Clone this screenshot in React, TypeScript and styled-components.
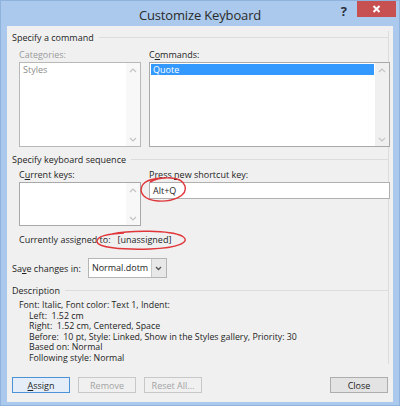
import React from "react";
import styled, { createGlobalStyle } from "styled-components";

const GlobalStyle = createGlobalStyle`
  html, body { margin: 0; padding: 0; background: #ffffff; }
  body { font-family: "Open Sans", "Noto Sans", sans-serif; }
`;

const FONT = `"Open Sans", "Noto Sans", sans-serif`;

const Window = styled.div`
  position: relative;
  width: 400px;
  height: 406px;
  box-sizing: border-box;
  background: #aac9ec;
  border: 1px solid #8fb3dc;
  display: flex;
  flex-direction: column;
  font-family: ${FONT};
  font-size: 9px;
  color: #1e1e1e;
`;

const TitleBar = styled.div`
  height: 25px;
  display: grid;
  grid-template-columns: 1fr auto 1fr;
  align-items: start;
`;

const Title = styled.div`
  grid-column: 2;
  font-size: 13px;
  letter-spacing: -0.15px;
  color: #2b2b2b;
  line-height: 28px;
`;

const Controls = styled.div`
  grid-column: 3;
  display: flex;
  justify-content: flex-end;
  align-items: flex-start;
`;

const Help = styled.div`
  font-size: 13px;
  font-weight: 700;
  color: #2b3040;
  margin: 1px 10px 0 0;
`;

const CloseBtn = styled.div`
  width: 39px;
  height: 16px;
  background: #c75050;
  display: flex;
  align-items: center;
  justify-content: center;
  margin-right: 3px;
`;

const Client = styled.div`
  flex: 1;
  margin: 0 6px 3px 6px;
  background: #f0f0f0;
  padding: 5px 0 0 5px;
  display: flex;
  flex-direction: column;
`;

const Panel = styled.div`
  margin-right: 4px;
  border-right: 1px solid #dcdcdc;
  padding-right: 6px;
  display: flex;
  flex-direction: column;
`;

const SectionHeader = styled.div<{ $mt?: number }>`
  display: flex;
  align-items: center;
  margin-top: ${(p) => p.$mt ?? 0}px;
  height: 12px;
  margin-right: -6px;
  &::after {
    content: "";
    flex: 1;
    height: 1px;
    background: #dcdcdc;
    margin-left: 5px;
  }
`;

const Row = styled.div<{ $mt?: number }>`
  display: grid;
  grid-template-columns: 122px 241px;
  column-gap: 8px;
  margin-left: 7px;
  margin-top: ${(p) => p.$mt ?? 0}px;
`;

const Label = styled.div<{ $disabled?: boolean }>`
  color: ${(p) => (p.$disabled ? "#9a9a9a" : "#1e1e1e")};
  height: 12px;
  line-height: 12px;
  margin-bottom: 1px;
  u { text-decoration: underline; text-underline-offset: 1px; }
`;

const ListBox = styled.div<{ $h: number; $disabled?: boolean }>`
  height: ${(p) => p.$h}px;
  box-sizing: border-box;
  border: 1px solid ${(p) => (p.$disabled ? "#b8b8b8" : "#a9a9a9")};
  background: #ffffff;
  display: grid;
  grid-template-columns: 1fr 14px;
`;

const ListItems = styled.div`
  padding: 1px 1px 0 1px;
`;

const ListItem = styled.div<{ $selected?: boolean; $disabled?: boolean }>`
  height: 11px;
  line-height: 11px;
  padding-left: 2px;
  background: ${(p) => (p.$selected ? "#3399ff" : "transparent")};
  color: ${(p) => (p.$selected ? "#ffffff" : p.$disabled ? "#8c8c8c" : "#1e1e1e")};
`;

const ScrollCol = styled.div<{ $bg?: string }>`
  background: ${(p) => p.$bg ?? "#f7f7f7"};
  display: flex;
  flex-direction: column;
  justify-content: space-between;
  align-items: center;
  padding: 5px 0 4px;
`;

const TextInput = styled.div`
  height: 17px;
  box-sizing: border-box;
  border: 1px solid #b0b0b0;
  background: #ffffff;
  padding-left: 3px;
  line-height: 15px;
  color: #1e1e1e;
`;

const AssignedRow = styled.div`
  display: flex;
  margin: 7px 0 0 7px;
  height: 13px;
  line-height: 13px;
  gap: 7px;
`;

const SaveRow = styled.div`
  display: flex;
  align-items: center;
  margin-top: 12px;
  height: 20px;
  gap: 7px;
  u { text-decoration: underline; text-underline-offset: 1px; }
`;

const Select = styled.div`
  width: 79px;
  height: 20px;
  box-sizing: border-box;
  border: 1px solid #b5b5b5;
  background: #ffffff;
  display: flex;
`;

const SelectValue = styled.div`
  flex: 1;
  padding-left: 3px;
  line-height: 18px;
`;

const SelectArrow = styled.div`
  width: 14px;
  border-left: 1px solid #c8c8c8;
  background: #e8e8e8;
  display: flex;
  align-items: center;
  justify-content: center;
`;

const Description = styled.div`
  margin: 4px 0 0 7px;
  font-size: 8.8px;
  line-height: 10.6px;
`;

const DescLine = styled.div<{ $indent?: boolean }>`
  padding-left: ${(p) => (p.$indent ? 10 : 0)}px;
  white-space: pre;
`;

const ButtonBar = styled.div`
  display: flex;
  margin-top: auto;
  margin-bottom: 9px;
  padding-right: 5px;
  gap: 8px;
`;

const Button = styled.div<{ $variant?: "default" | "disabled" | "normal"; $push?: boolean }>`
  width: 58px;
  height: 16px;
  box-sizing: border-box;
  display: flex;
  align-items: center;
  justify-content: center;
  margin-left: ${(p) => (p.$push ? "auto" : "0")};
  border: 1px solid
    ${(p) =>
      p.$variant === "default" ? "#4b93d6" : p.$variant === "disabled" ? "#c8c8c8" : "#adadad"};
  background: ${(p) =>
    p.$variant === "default" ? "#e5eef8" : p.$variant === "disabled" ? "#f0f0f0" : "#e3e3e3"};
  color: ${(p) => (p.$variant === "disabled" ? "#a3a3a3" : "#1e1e1e")};
  u { text-decoration: underline; text-underline-offset: 1px; }
`;

const Annotations = styled.svg`
  position: absolute;
  left: -1px;
  top: -1px;
  width: 400px;
  height: 406px;
  pointer-events: none;
`;

const Chevron = ({ up }: { up?: boolean }) => (
  <svg width="8" height="5" viewBox="0 0 8 5">
    <polyline
      points={up ? "1,4 4,1 7,4" : "1,1 4,4 7,1"}
      fill="none"
      stroke="#c4c4c4"
      strokeWidth="1.2"
    />
  </svg>
);

export default function App() {
  return (
    <>
      <GlobalStyle />
      <Window>
        <TitleBar>
          <Title>Customize Keyboard</Title>
          <Controls>
            <Help>?</Help>
            <CloseBtn>
              <svg width="9" height="8" viewBox="0 0 9 8">
                <path d="M1.5 1 L7.5 7 M7.5 1 L1.5 7" stroke="#ffffff" strokeWidth="2" />
              </svg>
            </CloseBtn>
          </Controls>
        </TitleBar>
        <Client>
          <Panel>
            <SectionHeader>Specify a command</SectionHeader>
            <Row $mt={6}>
              <div>
                <Label $disabled>Categories:</Label>
                <ListBox $h={85} $disabled>
                  <ListItems>
                    <ListItem $disabled>Styles</ListItem>
                  </ListItems>
                  <ScrollCol $bg="#f8f8f8">
                    <Chevron up />
                    <Chevron />
                  </ScrollCol>
                </ListBox>
              </div>
              <div>
                <Label>
                  C<u>o</u>mmands:
                </Label>
                <ListBox $h={85}>
                  <ListItems>
                    <ListItem $selected>Quote</ListItem>
                  </ListItems>
                  <ScrollCol $bg="#f0f0f0">
                    <Chevron up />
                    <Chevron />
                  </ScrollCol>
                </ListBox>
              </div>
            </Row>
            <SectionHeader $mt={6}>Specify keyboard sequence</SectionHeader>
            <Row $mt={4}>
              <div>
                <Label>
                  C<u>u</u>rrent keys:
                </Label>
                <ListBox $h={44}>
                  <ListItems />
                  <ScrollCol $bg="#f8f8f8">
                    <Chevron up />
                    <Chevron />
                  </ScrollCol>
                </ListBox>
              </div>
              <div>
                <Label>
                  Press <u>n</u>ew shortcut key:
                </Label>
                <TextInput>Alt+Q</TextInput>
              </div>
            </Row>
            <AssignedRow>
              <span>Currently assigned to:</span>
              <span>[unassigned]</span>
            </AssignedRow>
            <SaveRow>
              <span>
                Sa<u>v</u>e changes in:
              </span>
              <Select>
                <SelectValue>Normal.dotm</SelectValue>
                <SelectArrow>
                  <svg width="7" height="5" viewBox="0 0 7 5">
                    <polyline points="1,1 3.5,3.5 6,1" fill="none" stroke="#555" strokeWidth="1.3" />
                  </svg>
                </SelectArrow>
              </Select>
            </SaveRow>
            <SectionHeader $mt={6}>Description</SectionHeader>
            <Description>
              <DescLine>Font: Italic, Font color: Text 1, Indent:</DescLine>
              <DescLine $indent>Left:  1.52 cm</DescLine>
              <DescLine $indent>Right:  1.52 cm, Centered, Space</DescLine>
              <DescLine $indent>Before:  10 pt, Style: Linked, Show in the Styles gallery, Priority: 30</DescLine>
              <DescLine $indent>Based on: Normal</DescLine>
              <DescLine $indent>Following style: Normal</DescLine>
            </Description>
          </Panel>
          <ButtonBar>
            <Button $variant="default">
              <span>
                <u>A</u>ssign
              </span>
            </Button>
            <Button $variant="disabled">Remove</Button>
            <Button $variant="disabled">Reset All...</Button>
            <Button $variant="normal" $push>
              Close
            </Button>
          </ButtonBar>
        </Client>
        <Annotations viewBox="0 0 400 406">
          <path
            d="M150 182 C162 176 182 176 185 186 C188 196 172 202 158 201 C144 200 139 193 142 186 C145 180 155 178 166 178"
            fill="none"
            stroke="#e0363a"
            strokeWidth="1.4"
          />
          <path
            d="M112 234 C130 230 170 230 182 236 C192 242 178 248 150 249 C120 250 98 247 97 242 C96 236 108 234 124 233"
            fill="none"
            stroke="#e0363a"
            strokeWidth="1.4"
          />
        </Annotations>
      </Window>
    </>
  );
}
